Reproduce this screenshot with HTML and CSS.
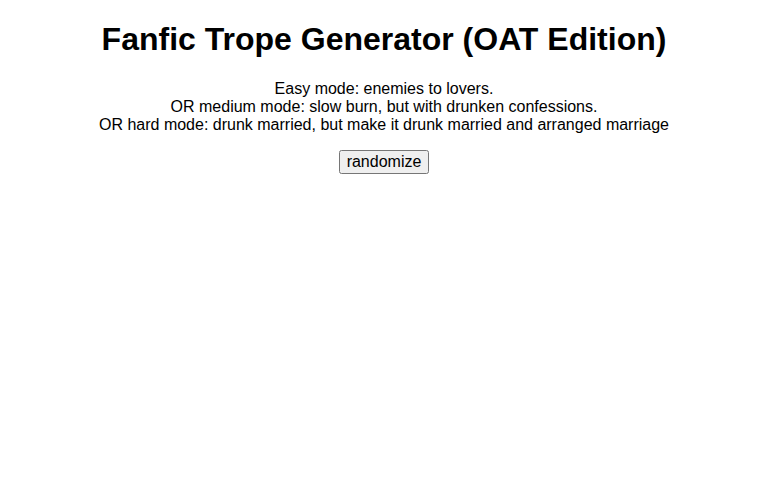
FILE: index.html
```html
<!DOCTYPE html>
<html>
<head>
<meta charset="utf-8">
<link rel="stylesheet" href="styles.css">
</head>
<body class="page">
  <h1 class="title">Fanfic Trope Generator (OAT Edition)</h1>
  <p class="trope">Easy mode: enemies to lovers.<br>OR medium mode: slow burn, but with drunken confessions.<br>OR hard mode: drunk married, but make it drunk married and arranged marriage</p>
  <button class="randomize">randomize</button>
</body>
</html>
```
FILE: styles.css
```css
.page {
  font-family: "Liberation Sans", Arial, sans-serif;
  text-align: center;
  color: #000;
  background: #fff;
  margin: 0 8px;
}
.title {
  font-size: 32px;
  font-weight: bold;
  margin: 21.44px 0;
}
.trope {
  font-size: 16px;
  margin: 16px 0;
}
.randomize {
  font-family: "Liberation Sans", Arial, sans-serif;
  font-size: 16px;
}
```
